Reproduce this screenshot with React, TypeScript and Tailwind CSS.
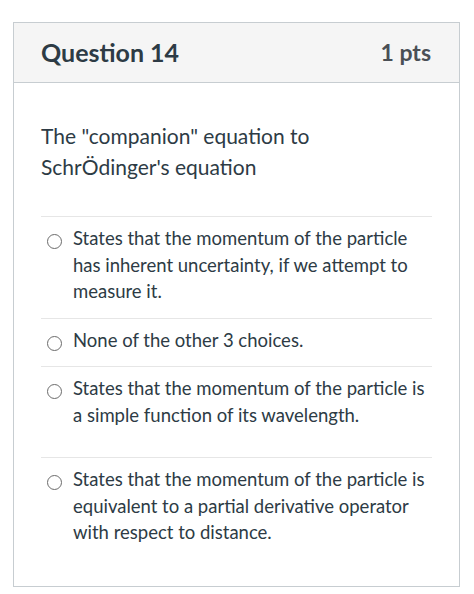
const options = [
  {
    text: "States that the momentum of the particle has inherent uncertainty, if we attempt to measure it.",
    extra: false,
  },
  { text: "None of the other 3 choices.", extra: false },
  {
    text: "States that the momentum of the particle is a simple function of its wavelength.",
    extra: true,
  },
  {
    text: "States that the momentum of the particle is equivalent to a partial derivative operator with respect to distance.",
    extra: false,
  },
];

export default function App() {
  return (
    <div className="min-h-[594px] bg-white pl-[13px] pt-[22px] font-['Lato','Liberation_Sans',sans-serif] text-[#2d3b45]">
      <div className="w-[447px] border border-[#c7cdd1]">
        {/* header */}
        <div className="flex h-[60px] items-center justify-between border-b border-[#c7cdd1] bg-[#f5f5f5] pl-[27px] pr-[28px]">
          <h2 className="text-[25px] font-bold">Question 14</h2>
          <span className="text-[23px] font-bold text-[#4a4f55]">1 pts</span>
        </div>

        {/* body */}
        <div className="px-[27px] pt-[37px] pb-[27px]">
          <p className="mb-[34px] text-[21px] leading-[31px]">
            The "companion" equation to
            <br />
            SchrÖdinger's equation
          </p>

          <div>
            {options.map((o, i) => (
              <label
                key={i}
                className={`flex border-t border-[#e6e6e6] pt-[8px] ${o.extra ? "pb-[29px]" : "pb-[13px]"}`}
              >
                <span className="ml-[6px] mt-[9px] h-[15px] w-[15px] shrink-0 rounded-full border border-[#6b6b6b]" />
                <span className="ml-[11px] text-[18.5px] leading-[26.5px]">{o.text}</span>
              </label>
            ))}
          </div>
        </div>
      </div>
    </div>
  );
}
